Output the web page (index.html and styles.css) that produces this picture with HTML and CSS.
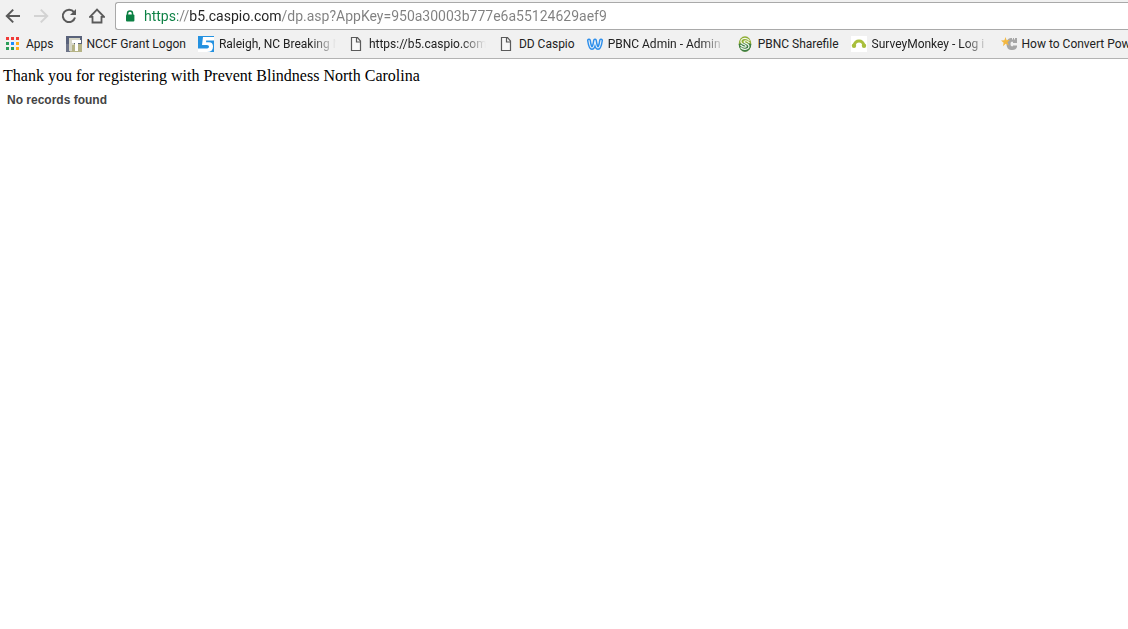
FILE: index.html
```html
<!DOCTYPE html>
<html lang="en">
<head>
    <meta charset="UTF-8">
    <meta name="viewport" content="width=device-width, initial-scale=1.0">
    <title>Registration</title>
    <link rel="stylesheet" href="styles.css">
</head>
<body>

    <header class="browser">
        <div class="toolbar">
            <button class="nav-btn" type="button" aria-label="Back">
                <svg width="16" height="16" viewBox="0 0 16 16"><path d="M15 8H2M8.2 1.6L1.8 8L8.2 14.4" fill="none" stroke="#5a5a5a" stroke-width="2"/></svg>
            </button>
            <button class="nav-btn" type="button" aria-label="Forward" disabled>
                <svg width="16" height="16" viewBox="0 0 16 16"><path d="M1 8H14M7.8 1.6L14.2 8L7.8 14.4" fill="none" stroke="#d3d3d3" stroke-width="2"/></svg>
            </button>
            <button class="nav-btn" type="button" aria-label="Reload">
                <svg width="16" height="16" viewBox="0 0 16 16"><path d="M13 4.2A6.2 6.2 0 1 0 14 9.5" fill="none" stroke="#5a5a5a" stroke-width="2"/><path d="M15 1V7H9z" fill="#5a5a5a"/></svg>
            </button>
            <button class="nav-btn" type="button" aria-label="Home">
                <svg width="16" height="16" viewBox="0 0 16 16"><path d="M1 8.8L8 1.6L15 8.8H12.5V14.5H3.5V8.8z" fill="none" stroke="#5a5a5a" stroke-width="1.8"/></svg>
            </button>
            <div class="address">
                <svg width="10" height="12" viewBox="0 0 10 12"><path d="M2.5 5V3.4a2.5 2.5 0 0 1 5 0V5" fill="none" stroke="#0b8043" stroke-width="1.5"/><rect x="1" y="4.5" width="8.4" height="7" rx="1" fill="#0b8043"/></svg>
                <input class="url" type="text" aria-label="Address" spellcheck="false" value="https://b5.caspio.com/dp.asp?AppKey=950a30003b777e6a55124629aef9">
            </div>
        </div>

        <nav class="bookmarks">
            <a class="bookmark" href="#">
                <svg width="16" height="16" viewBox="0 0 16 16">
                    <path d="M1 1h3v3H1zM6 1h3v3H6zM11 1h3v3h-3z" fill="#f03a37"/>
                    <path d="M1 6h3v3H1zM1 11h3v3H1zM6 11h3v3H6z" fill="#2a9d58"/>
                    <path d="M6 6h3v3H6z" fill="#1a8cff"/>
                    <path d="M11 6h3v3h-3zM11 11h3v3h-3z" fill="#ffab1a"/>
                </svg>
                <span class="label">Apps</span>
            </a>
            <a class="bookmark" href="#">
                <svg width="16" height="16" viewBox="0 0 16 16">
                    <path d="M0 0h16v16H0z" fill="#59627a"/>
                    <path d="M4 8h12v8H4z" fill="#b5b386"/>
                    <path d="M0 8h4v8H0z" fill="#6d7488"/>
                    <path d="M3 2h11v2H6v3h2v2H6v6H3z" fill="#d6d6c8"/>
                    <path d="M6 4h9v3h-3v8H9V7H6z" fill="#fff"/>
                </svg>
                <span class="label">NCCF Grant Logon</span>
            </a>
            <a class="bookmark" href="#">
                <svg width="16" height="16" viewBox="0 0 16 16">
                    <path d="M0 0h16v16H0z" fill="#2491e0"/>
                    <path d="M5 1H16V4.5H8.2L8 6.2H11Q15 6.2 15 10.500Q15 16 9 16H0V12.500H8Q11 12.500 11 10.500Q11 9 9 9H4z" fill="#fff"/>
                </svg>
                <span class="label faded">Raleigh, NC Breaking N</span>
            </a>
            <a class="bookmark" href="#">
                <svg width="16" height="16" viewBox="0 0 16 16"><path d="M3.5 1.5h6l3 3.5v9.5h-9zM8.5 1.5V6h4" fill="#f8f8f8" stroke="#5a5a5a" stroke-width="1.2"/></svg>
                <span class="label faded">https://b5.caspio.com/</span>
            </a>
            <a class="bookmark" href="#">
                <svg width="16" height="16" viewBox="0 0 16 16"><path d="M3.5 1.5h6l3 3.5v9.5h-9zM8.5 1.5V6h4" fill="#f8f8f8" stroke="#5a5a5a" stroke-width="1.2"/></svg>
                <span class="label">DD Caspio</span>
            </a>
            <a class="bookmark" href="#">
                <svg width="16" height="16" viewBox="0 0 16 16">
                    <path d="M2 4.500Q3 12 5 12T8 4.500Q9 12 11 12T14 4.500" fill="none" stroke="#2d8eeb" stroke-width="4" stroke-linecap="round" stroke-linejoin="round"/>
                    <path d="M2 4.500Q3 12 5 12T8 4.500Q9 12 11 12T14 4.500" fill="none" stroke="#e3f0fb" stroke-width="1.200" stroke-linecap="round" stroke-linejoin="round"/>
                </svg>
                <span class="label faded">PBNC Admin - Admin</span>
            </a>
            <a class="bookmark" href="#">
                <svg width="16" height="16" viewBox="0 0 16 16">
                    <ellipse cx="8" cy="8" rx="6.3" ry="7.8" fill="#8fae35"/>
                    <path d="M1.7 8Q8 6 14.3 8a6.3 7.8 0 0 1-12.600 0z" fill="#3d7d46"/>
                    <path d="M12.500 4.600C10 1.800 6 1.800 4.300 4C3 6.500 5 7.600 7 8.500C9 9.400 9.800 10.300 8.500 11C7 11.600 5 10.600 3.500 9" fill="none" stroke="#f5f8ec" stroke-width="1.200"/>
                    <path d="M12.500 7C10.500 5 8.500 4.300 7.300 5.200C6.500 6.300 8 6.900 9.500 7.600C12 8.800 12.600 10.500 11.300 12.200C9.500 14 6 13.800 3.500 11.500" fill="none" stroke="#f5f8ec" stroke-width="1.200"/>
                </svg>
                <span class="label">PBNC Sharefile</span>
            </a>
            <a class="bookmark" href="#">
                <svg width="16" height="16" viewBox="0 0 16 16">
                    <path d="M0 0h16v16H0z" fill="#fff"/>
                    <path d="M3 9.500C4.500 3.500 11.500 3.500 13 9.500" fill="none" stroke="#a9bf3c" stroke-width="3"/>
                    <circle cx="3" cy="9.800" r="2.200" fill="#a9bf3c"/>
                    <circle cx="13" cy="9.800" r="2.200" fill="#a9bf3c"/>
                </svg>
                <span class="label faded">SurveyMonkey - Log i</span>
            </a>
            <a class="bookmark" href="#">
                <svg width="16" height="16" viewBox="0 0 16 16">
                    <path d="M16 7h-4V5.800H10.500Q9.500 6 9.500 8T10.500 10.300H12V9.500h4V11Q15 14 11.500 14H10Q5.500 13.500 5.500 8T10 2h1v1.500h1V2h1v1.500h1V2h2z" fill="#a6a6a6"/>
                    <path d="M4.500 1L5.600 4.300L9 3.800L6.400 6.200L8 9.500L4.700 7.800L2 10.300L2.600 6.800L0 4.500L3.400 4.300z" fill="#f4b840"/>
                </svg>
                <span class="label">How to Convert PowerPoint</span>
            </a>
        </nav>
    </header>

    <main class="content">
        <p class="message">Thank you for registering with Prevent Blindness North Carolina</p>
        <p class="no-records">No records found</p>
    </main>

</body>
</html>
```
FILE: styles.css
```css
* {
    margin: 0;
    padding: 0;
    box-sizing: border-box;
}

body {
    background-color: #fff;
    overflow-x: hidden;
}

svg {
    display: block;
    flex-shrink: 0;
}

.browser {
    background-color: #f1f1f1;
    border-bottom: 1px solid #b3b3b3;
    overflow: hidden;
}

.toolbar {
    display: flex;
    align-items: center;
    gap: 12px;
    padding: 2px 0 0 5px;
}

.nav-btn {
    border: none;
    background: none;
}

.address {
    flex: 1;
    display: flex;
    align-items: center;
    gap: 9px;
    height: 28px;
    margin-left: -2px;
    padding-left: 9px;
    background-color: #fff;
    border: 1px solid #a9a9a9;
    border-right: none;
    border-radius: 3px 0 0 3px;
}

.url {
    flex: 1;
    border: none;
    outline: none;
    font-family: Roboto, "Open Sans", sans-serif;
    font-size: 14px;
    line-height: 24px;
    color: transparent;
    /* scheme green, host black, the rest grey */
    background: linear-gradient(to right, #0b8043 0 34px, #808080 34px 45px, #222 45px 137px, #808080 137px);
    background-clip: text;
    -webkit-background-clip: text;
}

.bookmarks {
    display: flex;
    align-items: center;
    gap: 12px;
    height: 28px;
    padding-left: 5px;
}

.bookmark {
    display: flex;
    align-items: center;
    flex-shrink: 0;
    gap: 5px;
    color: #222;
    text-decoration: none;
}

.label {
    white-space: nowrap;
    font-family: Roboto, "Open Sans", sans-serif;
    font-size: 12px;
    line-height: 18px;
}

.faded {
    width: 117px;
    overflow: hidden;
    -webkit-mask-image: linear-gradient(to right, #000 92px, transparent 117px);
    mask-image: linear-gradient(to right, #000 92px, transparent 117px);
}

.content {
    padding: 8px 3px;
}

.message {
    font-family: "Liberation Serif", "Times New Roman", serif;
    font-size: 16px;
    line-height: 18px;
    color: #000;
}

.no-records {
    padding: 8px 4px;
    font-family: "Liberation Sans", Arial, sans-serif;
    font-size: 12px;
    font-weight: bold;
    line-height: 14px;
    color: #444;
}
```
